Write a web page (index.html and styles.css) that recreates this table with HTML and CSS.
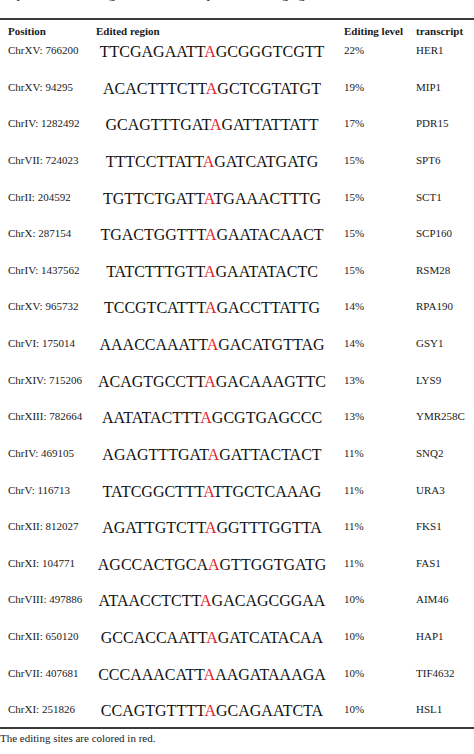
FILE: index.html
```html
<!DOCTYPE html>
<html>
<head>
<meta charset="utf-8">
<link rel="stylesheet" href="styles.css">
</head>
<body>
<div class="caption">Top A-to-I editing sites in the protein-coding genes</div>
<div class="table">
  <div class="head">
    <div class="c1">Position</div>
    <div class="c2">Edited region</div>
    <div class="c3">Editing level</div>
    <div class="c4">transcript</div>
  </div>
  <div class="body">
    <div class="c1">ChrXV: 766200</div><div class="seq">TTCGAGAATT<span class="ed">A</span>GCGGGTCGTT</div><div class="c3">22%</div><div class="c4">HER1</div>
    <div class="c1">ChrXV: 94295</div><div class="seq">ACACTTTCTT<span class="ed">A</span>GCTCGTATGT</div><div class="c3">19%</div><div class="c4">MIP1</div>
    <div class="c1">ChrIV: 1282492</div><div class="seq">GCAGTTTGAT<span class="ed">A</span>GATTATTATT</div><div class="c3">17%</div><div class="c4">PDR15</div>
    <div class="c1">ChrVII: 724023</div><div class="seq">TTTCCTTATT<span class="ed">A</span>GATCATGATG</div><div class="c3">15%</div><div class="c4">SPT6</div>
    <div class="c1">ChrII: 204592</div><div class="seq">TGTTCTGATT<span class="ed">A</span>TGAAACTTTG</div><div class="c3">15%</div><div class="c4">SCT1</div>
    <div class="c1">ChrX: 287154</div><div class="seq">TGACTGGTTT<span class="ed">A</span>GAATACAACT</div><div class="c3">15%</div><div class="c4">SCP160</div>
    <div class="c1">ChrIV: 1437562</div><div class="seq">TATCTTTGTT<span class="ed">A</span>GAATATACTC</div><div class="c3">15%</div><div class="c4">RSM28</div>
    <div class="c1">ChrXV: 965732</div><div class="seq">TCCGTCATTT<span class="ed">A</span>GACCTTATTG</div><div class="c3">14%</div><div class="c4">RPA190</div>
    <div class="c1">ChrVI: 175014</div><div class="seq">AAACCAAATT<span class="ed">A</span>GACATGTTAG</div><div class="c3">14%</div><div class="c4">GSY1</div>
    <div class="c1">ChrXIV: 715206</div><div class="seq">ACAGTGCCTT<span class="ed">A</span>GACAAAGTTC</div><div class="c3">13%</div><div class="c4">LYS9</div>
    <div class="c1">ChrXIII: 782664</div><div class="seq">AATATACTTT<span class="ed">A</span>GCGTGAGCCC</div><div class="c3">13%</div><div class="c4">YMR258C</div>
    <div class="c1">ChrIV: 469105</div><div class="seq">AGAGTTTGAT<span class="ed">A</span>GATTACTACT</div><div class="c3">11%</div><div class="c4">SNQ2</div>
    <div class="c1">ChrV: 116713</div><div class="seq">TATCGGCTTT<span class="ed">A</span>TTGCTCAAAG</div><div class="c3">11%</div><div class="c4">URA3</div>
    <div class="c1">ChrXII: 812027</div><div class="seq">AGATTGTCTT<span class="ed">A</span>GGTTTGGTTA</div><div class="c3">11%</div><div class="c4">FKS1</div>
    <div class="c1">ChrXI: 104771</div><div class="seq">AGCCACTGCA<span class="ed">A</span>GTTGGTGATG</div><div class="c3">11%</div><div class="c4">FAS1</div>
    <div class="c1">ChrVIII: 497886</div><div class="seq">ATAACCTCTT<span class="ed">A</span>GACAGCGGAA</div><div class="c3">10%</div><div class="c4">AIM46</div>
    <div class="c1">ChrXII: 650120</div><div class="seq">GCCACCAATT<span class="ed">A</span>GATCATACAA</div><div class="c3">10%</div><div class="c4">HAP1</div>
    <div class="c1">ChrVII: 407681</div><div class="seq">CCCAAACATT<span class="ed">A</span>AAGATAAAGA</div><div class="c3">10%</div><div class="c4">TIF4632</div>
    <div class="c1">ChrXI: 251826</div><div class="seq">CCAGTGTTTT<span class="ed">A</span>GCAGAATCTA</div><div class="c3">10%</div><div class="c4">HSL1</div>
  </div>
</div>
<div class="note">The editing sites are colored in red.</div>
</body>
</html>
```
FILE: styles.css
```css
html, body {
  margin: 0;
  padding: 0;
  background: #fff;
}
body {
  font-family: "Liberation Serif", "Times New Roman", serif;
  color: #1a1a1a;
  width: 474px;
  height: 754px;
  overflow: hidden;
}
.caption {
  font-size: 14px;
  line-height: 14px;
  height: 14px;
  margin-top: -13px;
  padding-left: 2px;
  white-space: nowrap;
  word-spacing: 6px;
}
.table {
  margin-top: 17px;
  border-top: 2px solid #3a3a3a;
  border-bottom: 2px solid #3a3a3a;
}
.head, .body {
  display: grid;
  grid-template-columns: 88px 248px 72px 1fr;
  padding-left: 8px;
}
.head {
  height: 23px;
  line-height: 23px;
  font-size: 11px;
  font-weight: bold;
}
.body {
  grid-auto-rows: 25px;
  row-gap: 11.64px;
  font-size: 11px;
  line-height: 14px;
}
.seq {
  font-size: 16px;
  line-height: 18px;
  text-align: center;
  padding-right: 16px;
  color: #111;
  white-space: nowrap;
}
.ed {
  color: #e3222d;
}
.note {
  font-size: 11px;
  line-height: 14px;
  padding-top: 2px;
  white-space: nowrap;
}
```
